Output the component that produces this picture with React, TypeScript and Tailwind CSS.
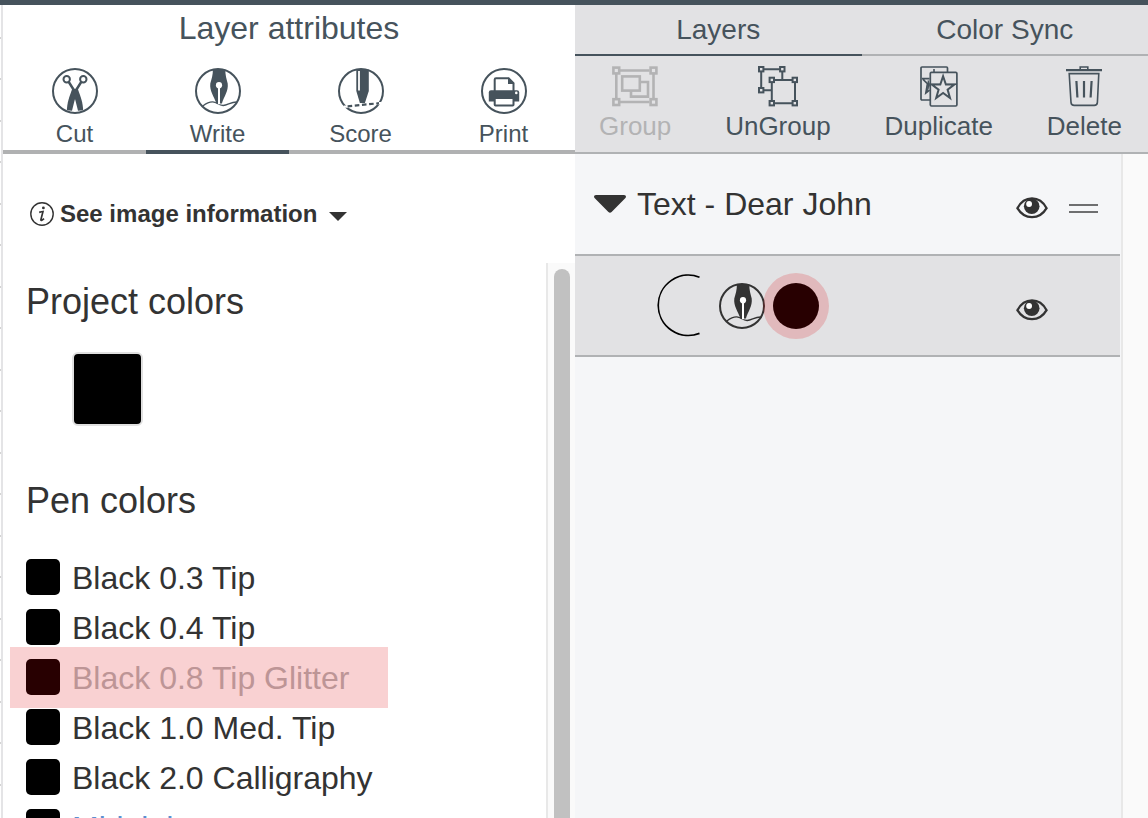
import type { ReactNode } from "react";

function CutIcon() {
  return (
    <svg width="46" height="46" viewBox="0 0 46 46" fill="none" stroke="currentColor" aria-hidden="true">
      <circle cx="23" cy="23" r="22" strokeWidth="2" />
      <circle cx="14.7" cy="11.3" r="3.2" strokeWidth="2" />
      <circle cx="31.3" cy="11.3" r="3.2" strokeWidth="2" />
      <path d="M16.8 14 24 25.5M29.2 14 22 25.5" strokeWidth="2.4" />
      <path d="M20.8 19.5 25 23 20 42.8 14.9 42.3C14.9 36 17 29 20.8 19.5Z" fill="currentColor" stroke="none" />
      <path d="M25.2 19.5 21 23 26 42.8 31.1 42.3C31.1 36 29 29 25.2 19.5Z" fill="currentColor" stroke="none" />
    </svg>
  );
}

function WriteIcon() {
  return (
    <svg width="46" height="46" viewBox="0 0 46 46" fill="none" stroke="currentColor" aria-hidden="true">
      <circle cx="23" cy="23" r="22" strokeWidth="2" />
      <path
        d="M17.9 1.2H30.3C30.2 7 31.6 11 32.7 15.5 33.6 23 29.2 28 26.9 35.6H21.3C19 28 14.4 23 15.3 15.5 16.5 11 18 7 17.9 1.2Z"
        fill="currentColor"
        stroke="none"
      />
      <path d="M7.8 38C11.5 35.2 15.2 33.4 19 34.1 22.8 34.9 24 37.6 28.2 37.5 32.6 37.3 35.5 34.2 41.6 34" strokeWidth="1.3" />
      <circle cx="24" cy="17.2" r="3.1" className="fill-white" stroke="none" />
      <path d="M23 18H25V36.2H23Z" className="fill-white" stroke="none" />
    </svg>
  );
}

function ScoreIcon() {
  return (
    <svg width="46" height="46" viewBox="0 0 46 46" fill="none" stroke="currentColor" aria-hidden="true">
      <circle cx="23" cy="23" r="22" strokeWidth="2" />
      <path d="M5.8 38.6H10M39.5 35.3H43" className="stroke-white" strokeWidth="2.4" />
      <path d="M18.3 1.4H30.8V23L26.9 35H21.9L18.3 23Z" fill="currentColor" stroke="none" />
      <path d="M20.1 3H21.9V22.4H20.1Z" className="fill-white" stroke="none" />
      <path d="M9.6 38.3 41 35.2" strokeWidth="2.2" strokeDasharray="4.6 2.6" />
    </svg>
  );
}

function PrintIcon() {
  return (
    <svg width="46" height="46" viewBox="0 0 46 46" fill="none" stroke="currentColor" aria-hidden="true">
      <circle cx="23" cy="23" r="22" strokeWidth="2" />
      <path d="M13.7 23V11.5Q13.7 10.2 15 10.2H27.6L32.5 15.2V23" strokeWidth="2" />
      <path d="M27 9.6V16H33.4Z" fill="currentColor" stroke="none" />
      <path d="M10 22.3H36Q38.2 22.3 38.2 24.4V33.4H7.8V24.4Q7.8 22.3 10 22.3Z" fill="currentColor" stroke="none" />
      <circle cx="35.3" cy="24.9" r="1.3" className="fill-white" stroke="none" />
      <rect x="13.7" y="30" width="18.8" height="7.6" rx="0.8" className="fill-white" strokeWidth="2" />
    </svg>
  );
}

function GroupIcon() {
  return (
    <svg width="46" height="41" viewBox="0 0 46 41" fill="none" stroke="currentColor" strokeWidth="2.6" aria-hidden="true">
      <path d="M8 4.5H37.5M8 36H37.5M4.3 8V32M41.5 8V32" />
      <rect x="1.4" y="1.6" width="5.8" height="5.8" />
      <rect x="38.6" y="1.6" width="5.8" height="5.8" />
      <rect x="1.4" y="33.2" width="5.8" height="5.8" />
      <rect x="38.6" y="33.2" width="5.8" height="5.8" />
      <rect x="10.2" y="10.4" width="17.6" height="14.2" />
      <path d="M28 16H36V30.6H19V25" />
    </svg>
  );
}

function UngroupIcon() {
  return (
    <svg width="40" height="41" viewBox="0 0 40 41" fill="none" stroke="currentColor" strokeWidth="2" aria-hidden="true">
      <path d="M5.6 3.2H21.7M3.2 5.6V21.6M24.3 5.6V13.7M5.6 24.2H13.7" />
      <path d="M16.3 13.9H34.4M16.3 37.2H34.4M13.8 16.4V34.6M37 16.4V34.6" />
      <rect x="1" y="1" width="4.4" height="4.4" />
      <rect x="22.1" y="1" width="4.4" height="4.4" />
      <rect x="1" y="22" width="4.4" height="4.4" />
      <rect x="11.6" y="11.7" width="4.4" height="4.4" />
      <rect x="34.6" y="11.7" width="4.4" height="4.4" />
      <rect x="11.6" y="35" width="4.4" height="4.4" />
      <rect x="34.6" y="35" width="4.4" height="4.4" />
    </svg>
  );
}

function DuplicateIcon() {
  return (
    <svg width="38" height="41" viewBox="0 0 38 41" fill="none" stroke="currentColor" strokeWidth="1.7" aria-hidden="true">
      <path d="M10 34H2Q1 34 1 33V2Q1 1 2 1H26.5Q27.5 1 27.5 2V6" />
      <path d="M2 12.6H9.6M14 3V6M3 13.4 7.4 17.6 5.8 27.2 9.6 24.2" strokeWidth="1.6" />
      <path d="M8.2 14.5 9.6 19 7 26Z" fill="currentColor" strokeWidth="0.8" />
      <rect x="10.3" y="6.4" width="26.6" height="33.6" rx="1.2" />
      <path d="M10.5 18.4H20M26.6 18.4H36.7" strokeWidth="1.3" />
      <path d="M23.1 10.2 25.9 18.5H34.4L27.6 23.6 30 32 23.1 27 16.2 32 18.6 23.6 11.8 18.5H20.3Z" strokeWidth="2" />
    </svg>
  );
}

function DeleteIcon() {
  return (
    <svg width="36" height="41" viewBox="0 0 36 41" fill="none" stroke="currentColor" aria-hidden="true">
      <path d="M0 4.1H36" strokeWidth="2.2" />
      <path d="M14.2 3.2V1H21.8V3.2" strokeWidth="1.6" />
      <path d="M3.2 7.6H32.8L31.4 36.4Q31.2 39.4 28.2 39.4H8.2Q5.2 39.4 5 36.4Z" strokeWidth="1.6" />
      <path d="M10.4 15 11.4 31.5M18 15V31.5M25.6 15 24.6 31.5" strokeWidth="2.2" />
    </svg>
  );
}

function EyeIcon() {
  return (
    <svg width="32" height="22" viewBox="0 0 32 22" fill="none" aria-hidden="true">
      <path d="M1.4 11.2C8.5 -1.8 23.5 -1.8 30.6 11.2 23.5 23.2 8.5 23.2 1.4 11.2Z" stroke="currentColor" strokeWidth="2.3" />
      <circle cx="15.7" cy="9.2" r="7.8" fill="currentColor" />
      <circle cx="13.1" cy="7" r="2.9" className="fill-white" />
    </svg>
  );
}

function InfoIcon() {
  return (
    <svg width="24" height="24" viewBox="0 0 24 24" fill="none" stroke="currentColor" aria-hidden="true">
      <circle cx="12" cy="12" r="11.2" strokeWidth="1.4" />
      <circle cx="13.4" cy="5.9" r="1.4" fill="currentColor" stroke="none" />
      <path d="M9.2 10.4C10.8 9.9 12 9.6 13 9.5L10.9 17.6C10.7 18.9 11.8 18.8 14 16.7" strokeWidth="1.7" />
    </svg>
  );
}

const operations = [
  { label: "Cut", icon: <CutIcon />, active: false },
  { label: "Write", icon: <WriteIcon />, active: true },
  { label: "Score", icon: <ScoreIcon />, active: false },
  { label: "Print", icon: <PrintIcon />, active: false },
];

const actions: { label: string; icon: ReactNode; disabled?: boolean }[] = [
  { label: "Group", icon: <GroupIcon />, disabled: true },
  { label: "UnGroup", icon: <UngroupIcon /> },
  { label: "Duplicate", icon: <DuplicateIcon /> },
  { label: "Delete", icon: <DeleteIcon /> },
];

const pens = [
  { name: "Black 0.3 Tip", text: "text-[#333333]" },
  { name: "Black 0.4 Tip", text: "text-[#333333]" },
  { name: "Black 0.8 Tip Glitter", text: "text-[#b6b6b6]", highlighted: true },
  { name: "Black 1.0 Med. Tip", text: "text-[#333333]" },
  { name: "Black 2.0 Calligraphy", text: "text-[#333333]" },
  { name: "Midnight", text: "text-[#5c8fd0]" },
];

function AttributesPanel() {
  return (
    <section className="flex min-w-0 flex-1 flex-col bg-white">
      <header className="text-[#46535c]">
        <h1 className="text-center text-[32px] leading-[46px]">Layer attributes</h1>
        <div role="tablist" className="grid grid-cols-4">
          {operations.map((op) => (
            <button
              key={op.label}
              role="tab"
              aria-selected={op.active}
              className={
                op.active
                  ? "flex flex-col items-center gap-1 border-b-4 border-[#46535c] pt-[17px]"
                  : "flex flex-col items-center gap-1 border-b-4 border-[#b0b1b2] pt-[17px]"
              }
            >
              {op.icon}
              <span className="text-2xl">{op.label}</span>
            </button>
          ))}
        </div>
      </header>

      <div className="px-[27px] pt-11 pb-[33px]">
        <button className="flex items-center text-2xl font-bold">
          <InfoIcon />
          <span className="ml-[6px]">See image information</span>
          <svg className="mt-1 ml-3" width="18" height="9" viewBox="0 0 18 9" fill="currentColor" aria-hidden="true">
            <path d="M0 0H18L9 9Z" />
          </svg>
        </button>
      </div>

      <div className="flex min-h-0 flex-1">
        <div className="min-w-0 flex-1 overflow-hidden pt-[15px] pl-[23px]">
          <h2 className="text-4xl leading-[48px]">Project colors</h2>
          <button
            aria-label="Black"
            className="mt-[26px] ml-[46px] block h-[74px] w-[71px] rounded-md border-2 border-[#e0e0e0] bg-black"
          />
          <h2 className="mt-[51px] text-4xl leading-[48px]">Pen colors</h2>
          <ul className="mt-7">
            {pens.map((pen) => (
              <li key={pen.name} className="relative">
                <button className="flex h-[50px] items-center gap-3 text-[32px]">
                  <span className="-mt-[2px] h-9 w-[34px] rounded-[5px] bg-black" />
                  <span className={pen.text}>{pen.name}</span>
                </button>
                {pen.highlighted && (
                  <span className="pointer-events-none absolute -top-[6px] -bottom-[5px] -left-4 w-[378px] bg-[#de0004]/18" />
                )}
              </li>
            ))}
          </ul>
        </div>
        <div className="w-[29px] overflow-hidden border-l-2 border-[#e8e8e8] bg-[#fafafa] pt-[6px] pl-[6px]">
          <div className="h-full w-4 rounded-t-full bg-[#c1c1c1]" />
        </div>
      </div>
    </section>
  );
}

function LayersPanel() {
  return (
    <section className="flex w-[calc(50%-1px)] flex-col bg-[#f5f6f8]">
      <header className="border-b-2 border-[#b0b2b4] bg-[#e2e2e4] text-[#46535c]">
        <div role="tablist" className="grid grid-cols-2 text-[28px] leading-[49px]">
          <button role="tab" aria-selected="true" className="border-b-2 border-[#46535c]">
            Layers
          </button>
          <button role="tab" aria-selected="false" className="border-b-2 border-[#b0b2b4]">
            Color Sync
          </button>
        </div>
        <div className="flex justify-between pt-[10px] pr-[26px] pb-[10px] pl-6">
          {actions.map((action) => (
            <button
              key={action.label}
              disabled={action.disabled}
              className="flex flex-col items-center gap-1 disabled:text-[#b3b3b4]"
            >
              {action.icon}
              <span className="text-[26px] leading-[31px]">{action.label}</span>
            </button>
          ))}
        </div>
      </header>

      <div className="flex flex-1">
        <ul className="min-w-0 flex-1">
          <li className="flex h-[102px] items-center border-b-2 border-[#b0b2b4] pr-[22px] pl-[19px]">
            <button className="flex items-center gap-[11px] text-[32px]" aria-expanded="true">
              <svg width="32" height="18" viewBox="0 0 32 18" fill="currentColor" aria-hidden="true">
                <path d="M2 0H30C32 0 32.6 2 31.2 3.3L17.6 16.9Q16 18.4 14.4 16.9L.8 3.3C-.6 2 0 0 2 0Z" />
              </svg>
              <span>Text - Dear John</span>
            </button>
            <button className="mt-2 ml-auto" aria-label="Hide group">
              <EyeIcon />
            </button>
            <button className="mt-2 ml-[21px] flex w-[29px] flex-col gap-[5px]" aria-label="Reorder group">
              <span className="h-[2px] w-full bg-[#6e6f70]" />
              <span className="h-[2px] w-full bg-[#6e6f70]" />
            </button>
          </li>
          <li className="flex h-[101px] items-center border-b-2 border-[#b0b2b4] bg-[#e2e2e4] pr-[72px] pl-[81px]">
            <svg width="46" height="64" viewBox="0 0 46 64" fill="none" role="img" aria-label="Layer shape">
              <path d="M43.5 3.2A30.2 30.2 0 1 0 43.5 59.4" className="stroke-black" strokeWidth="1.7" />
            </svg>
            <button className="ml-[17px]" aria-label="Write">
              <WriteIcon />
            </button>
            <button className="relative ml-2 h-[46px] w-[46px] rounded-full bg-black" aria-label="Black 0.8 Tip Glitter">
              <span className="pointer-events-none absolute -inset-[10px] rounded-full bg-[#de0004]/18" />
            </button>
            <button className="mt-2 ml-auto" aria-label="Hide layer">
              <EyeIcon />
            </button>
          </li>
        </ul>
        <div className="ml-px w-[27px] border-l-2 border-[#e8e8e8] bg-[#fafafa]" />
      </div>
    </section>
  );
}

export default function App() {
  return (
    <main className="flex h-screen overflow-hidden border-t-[5px] border-[#46535c] bg-white font-['Liberation_Sans',Arial,sans-serif] text-[#333333]">
      <div className="w-[3px] border-r-2 border-[#e4e4e6] bg-[repeating-linear-gradient(to_bottom,white_0px,white_32px,#d4d4d4_32px,#d4d4d4_34px,white_34px,white_73px,#d4d4d4_73px,#d4d4d4_75px,white_75px,white_83px)]" />
      <AttributesPanel />
      <LayersPanel />
    </main>
  );
}
